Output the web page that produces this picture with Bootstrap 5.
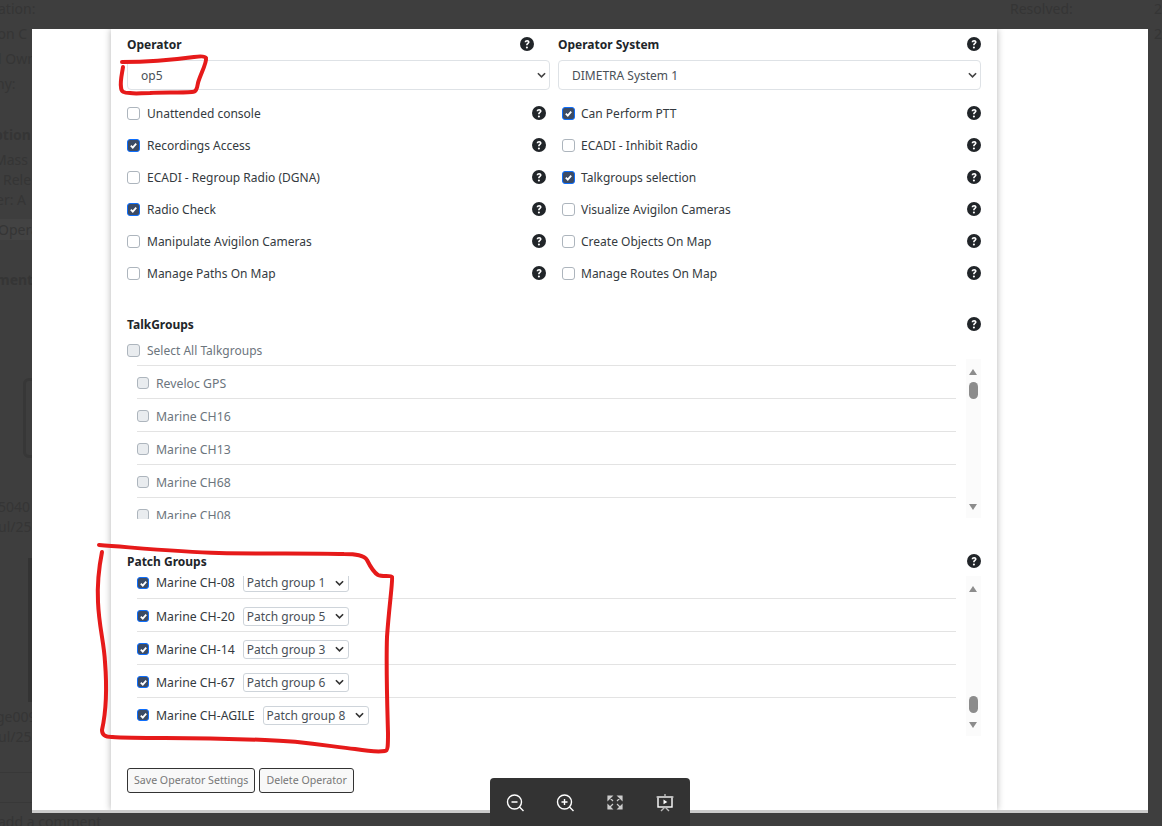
<!DOCTYPE html>
<html lang="en">
<head>
    <meta charset="UTF-8">
    <title>Operator Settings</title>
    <link href="https://cdn.jsdelivr.net/npm/bootstrap@5.3.0/dist/css/bootstrap.min.css" rel="stylesheet">
    <style>
        html, body {
            height: 826px;
            overflow: hidden;
        }
        body {
            background-color: #3e3e3e;
            font-family: "Noto Sans", "Open Sans", sans-serif;
            font-size: 12px;
            color: #343a40;
        }
        /* page behind the viewer, only its edges show */
        .ghost-page {
            height: 826px;
            color: #353535;
            font-size: 14px;
            white-space: nowrap;
            overflow: hidden;
        }
        .ghost-left {
            width: 32px;
        }
        .ghost-line {
            height: 20px;
            line-height: 20px;
        }
        .ghost-tall {
            height: 25px;
            line-height: 25px;
        }
        .ghost-first { margin-top: -4px; }
        .ghost-gap-a { margin-top: 29px; }
        .ghost-gap-b { margin-top: 30px; }
        .ghost-gap-c { margin-top: 39px; }
        .ghost-gap-d { margin-top: 88px; }
        .ghost-gap-e { margin-top: 9px; }
        .ghost-gap-f { margin-top: 21px; }
        .ghost-gap-g { margin-top: 25px; }
        .ghost-gap-h { margin-top: 5px; }
        .shift-a { margin-left: -6px; }
        .shift-b { margin-left: -4px; }
        .shift-c { margin-left: -2px; }
        .shift-d { margin-left: 3px; }
        .ghost-btn {
            background: #434343;
            height: 21px;
            line-height: 21px;
        }
        .ghost-box {
            margin-left: 23px;
            width: 20px;
            height: 80px;
            border: 3px solid #373737;
            border-radius: 6px;
        }
        .ghost-image {
            margin-left: 28px;
            width: 10px;
            height: 144px;
            background: #333;
        }
        .ghost-rule {
            height: 1px;
            background: #383838;
        }
        .ghost-right {
            width: 152px;
        }
        .viewer-sheet {
            position: absolute;
            left: 32px;
            top: 29px;
            width: 1116px;
            height: 784px;
            background: #fff;
            border-bottom: 3px solid #ccc;
            padding-left: 79px;
            overflow: hidden;
        }
        .form-sheet {
            width: 886px;
            height: 781px;
            padding: 0 16px;
            box-shadow: 0 0 7px rgba(0, 0, 0, .3);
            background: #fff;
        }
        .col-pair {
            display: grid;
            grid-template-columns: 423px 423px;
            column-gap: 8px;
        }
        .field-title {
            font-weight: 700;
            font-size: 12px;
            line-height: 18px;
            color: #212529;
            height: 22px;
        }
        .field-title span {
            padding-top: 1px;
        }
        .head-row {
            margin-top: 4px;
        }
        .op-select {
            height: 30px;
            margin-top: 5px;
            padding: 2px 30px 0 13px;
            font-size: 12px;
            color: #495057;
            border-radius: 4px;
            background-image: url("data:image/svg+xml,%3Csvg xmlns='http://www.w3.org/2000/svg' viewBox='0 0 10 6'%3E%3Cpath d='M1 1l4 4 4-4' fill='none' stroke='%23444' stroke-width='1.8'/%3E%3C/svg%3E");
            background-size: 9px 6px;
            background-position: right 3px center;
        }
        .help-dot {
            width: 14px;
            height: 14px;
            flex: none;
        }
        .perm-grid {
            margin-top: 7px;
        }
        .perm-row {
            height: 32px;
        }
        .perm-label {
            padding-top: 2px;
        }
        .left-perms .perm-row {
            padding-right: 4px;
        }
        .right-perms .perm-row {
            padding-left: 4px;
        }
        .right-perms .tick {
            margin-right: 6px;
        }
        .tick {
            width: 13px;
            height: 13px;
            margin: 0 7px 0 0;
            flex: none;
            border-radius: 3px;
            border: 1px solid #adb5bd;
            background: #fff;
            position: relative;
        }
        .tick.on {
            background: #3c4b64;
            border-color: #0d6efd;
        }
        .tick.on svg {
            position: absolute;
            left: 1px;
            top: 1px;
            width: 9px;
            height: 9px;
        }
        .tick.off {
            background: #e9ecef;
        }
        .group-block {
            position: relative;
        }
        .talk-block {
            margin-top: 24px;
        }
        .patch-block {
            margin-top: 31px;
        }
        .select-all {
            height: 30px;
        }
        .muted-text {
            color: #6c757d;
        }
        .scroll-list {
            margin-left: 10px;
            width: 819px;
            overflow: hidden;
            font-size: 12.25px;
        }
        .talk-list {
            height: 154px;
        }
        .patch-list {
            height: 160px;
            margin-top: 4px;
        }
        .patch-inner {
            margin-top: -11px;
        }
        .scroll-list .tick {
            width: 12px;
            height: 12px;
        }
        .list-line {
            height: 33px;
            padding-top: 2px;
            border-top: 1px solid #e3e3e3;
        }
        .list-name {
            padding-top: 2px;
        }
        .fake-scroll {
            position: absolute;
            left: 839px;
            width: 15px;
            background: #fbfbfb;
        }
        .talk-scroll {
            top: 46px;
            height: 159px;
        }
        .patch-scroll {
            top: 26px;
            height: 160px;
        }
        .arrow-up, .arrow-down {
            position: absolute;
            left: 3px;
            width: 0;
            height: 0;
            border-left: 4.5px solid transparent;
            border-right: 4.5px solid transparent;
        }
        .arrow-up {
            top: 10px;
            border-bottom: 6px solid #8c8c8c;
        }
        .arrow-down {
            bottom: 8px;
            border-top: 6px solid #8c8c8c;
        }
        .scroll-thumb {
            position: absolute;
            left: 3px;
            width: 9px;
            height: 17px;
            border-radius: 5px;
            background: #8c8c8c;
        }
        .talk-scroll .scroll-thumb {
            top: 23px;
        }
        .patch-scroll .scroll-thumb {
            top: 120px;
        }
        .patch-select {
            appearance: none;
            width: 106px;
            height: 19px;
            margin-left: 8px;
            padding: 0 14px 0 3px;
            border: 1px solid #ced4da;
            border-radius: 3px;
            font-size: 12px;
            line-height: 17px;
            color: #495057;
            background: #fff url("data:image/svg+xml,%3Csvg xmlns='http://www.w3.org/2000/svg' viewBox='0 0 10 6'%3E%3Cpath d='M1 1l4 4 4-4' fill='none' stroke='%23333' stroke-width='1.8'/%3E%3C/svg%3E") no-repeat right 4px center / 9px 6px;
        }
        .sheet-actions {
            margin-top: 32px;
        }
        .sheet-btn {
            height: 25px;
            padding: 0 6px;
            font-size: 10.6px;
            line-height: 23px;
            color: #777;
            background: #f8f8f8;
            border: 1px solid #333;
            border-radius: 3px;
        }
        .zoom-bar {
            position: absolute;
            left: 490px;
            top: 778px;
            width: 200px;
            height: 48px;
            background: #333;
            border-radius: 4px 4px 0 0;
        }
        .zoom-bar svg {
            width: 20px;
            height: 20px;
        }
        .ink-layer {
            position: absolute;
            left: 0;
            top: 0;
            pointer-events: none;
        }
    </style>
</head>
<body>
    <svg width="0" height="0" class="position-absolute">
        <symbol id="help" viewBox="0 0 16 16">
            <circle cx="8" cy="8" r="8" fill="#212529"/>
            <path d="M5.300 6.100C5.400 4.500 6.600 3.500 8.200 3.500c1.600 0 2.700 1 2.700 2.300 0 1.100-.6 1.600-1.300 2.100-.6.400-.8.700-.8 1.300v.3H7V9c0-1 .4-1.500 1-1.900.6-.4.900-.7.900-1.100 0-.5-.3-.8-.8-.8-.6 0-.9.300-1 .9z" fill="#fff"/>
            <circle cx="7.900" cy="12" r="1.200" fill="#fff"/>
        </symbol>
    </svg>

    <div class="ghost-page d-flex justify-content-between">
        <div class="ghost-left">
            <div class="ghost-tall ghost-first shift-c">ation:</div>
            <div class="ghost-tall shift-a">ion C</div>
            <div class="ghost-tall shift-c">l Own</div>
            <div class="ghost-tall shift-b">ny:</div>
            <div class="ghost-line ghost-gap-a shift-a fw-bold">ption</div>
            <div class="ghost-line shift-a ghost-gap-h">Mass</div>
            <div class="ghost-line shift-d">Rele</div>
            <div class="ghost-line shift-b">er: A</div>
            <div class="ghost-btn ghost-gap-e"><span class="shift-c d-block">Opera</span></div>
            <div class="ghost-line ghost-gap-b shift-b fw-bold">ment</div>
            <div class="ghost-box ghost-gap-d"></div>
            <div class="ghost-line ghost-gap-c shift-c">5040</div>
            <div class="ghost-line shift-c">ul/25 9</div>
            <div class="ghost-image ghost-gap-f"></div>
            <div class="ghost-line shift-b ghost-gap-h">ge009</div>
            <div class="ghost-line shift-c">ul/25 2</div>
            <div class="ghost-rule ghost-gap-g"></div>
            <div class="ghost-rule ghost-gap-a"></div>
            <div class="ghost-line ghost-gap-e shift-c">add a comment</div>
        </div>
        <div class="ghost-right d-flex justify-content-between">
            <div class="ghost-tall ghost-first">Resolved:</div>
            <div class="ghost-first">
                <div class="ghost-tall">2</div>
                <div class="ghost-tall">2</div>
            </div>
        </div>
    </div>

    <div class="viewer-sheet">
        <div class="form-sheet">
            <div class="col-pair">
                <div>
                    <div class="head-row field-title d-flex justify-content-between align-items-center pe-3">
                        <span>Operator</span>
                        <svg class="help-dot" viewBox="0 0 16 16"><use href="#help"/></svg>
                    </div>
                    <select class="form-select op-select"><option>op5</option></select>
                </div>
                <div>
                    <div class="head-row field-title d-flex justify-content-between align-items-center">
                        <span>Operator System</span>
                        <svg class="help-dot" viewBox="0 0 16 16"><use href="#help"/></svg>
                    </div>
                    <select class="form-select op-select"><option>DIMETRA System 1</option></select>
                </div>
            </div>

            <div class="col-pair perm-grid" id="perms"></div>

            <div class="group-block talk-block">
                <div class="field-title d-flex justify-content-between align-items-center">
                    <span>TalkGroups</span>
                    <svg class="help-dot" viewBox="0 0 16 16"><use href="#help"/></svg>
                </div>
                <div class="select-all d-flex align-items-center muted-text">
                    <span class="tick off"></span><span class="perm-label">Select All Talkgroups</span>
                </div>
                <div class="scroll-list talk-list" id="talkList"></div>
                <div class="fake-scroll talk-scroll">
                    <span class="arrow-up"></span>
                    <span class="scroll-thumb"></span>
                    <span class="arrow-down"></span>
                </div>
            </div>

            <div class="group-block patch-block">
                <div class="field-title d-flex justify-content-between align-items-center">
                    <span>Patch Groups</span>
                    <svg class="help-dot" viewBox="0 0 16 16"><use href="#help"/></svg>
                </div>
                <div class="scroll-list patch-list"><div class="patch-inner" id="patchList"></div></div>
                <div class="fake-scroll patch-scroll">
                    <span class="arrow-up"></span>
                    <span class="scroll-thumb"></span>
                    <span class="arrow-down"></span>
                </div>
            </div>

            <div class="sheet-actions d-flex gap-1">
                <button class="sheet-btn">Save Operator Settings</button>
                <button class="sheet-btn">Delete Operator</button>
            </div>
        </div>
    </div>

    <div class="zoom-bar d-flex justify-content-around align-items-center">
        <svg viewBox="0 0 20 20" fill="none" stroke="#fff" stroke-width="1.4"><circle cx="9.500" cy="10" r="7"/><path d="M6.500 10h6M14.500 15l4 4"/></svg>
        <svg viewBox="0 0 20 20" fill="none" stroke="#fff" stroke-width="1.4"><circle cx="9.500" cy="10" r="7"/><path d="M6.500 10h6M9.500 7v6M14.500 15l4 4"/></svg>
        <svg viewBox="0 0 20 20" fill="#ccc" stroke="#ccc" stroke-width="1.200"><path d="M3 4h4L3 8zM4.500 5.500L8 9M17 4h-4l4 4zM15.500 5.500L12 9M3 17h4l-4-4zM4.500 15.500L8 12M17 17h-4l4-4zM15.500 15.500L12 12"/></svg>
        <svg viewBox="0 0 20 20" fill="none" stroke="#fff" stroke-width="1.400"><rect x="3" y="5" width="14" height="10"/><path d="M10 2v3M10 15l-4 4M10 15l4 4M1.500 5h17" stroke="#bbb"/><path d="M8.500 7.500l3.800 2.400-3.800 2.400z" fill="#fff" stroke="none"/></svg>
    </div>

    <svg class="ink-layer" width="1162" height="826" fill="none" stroke="#e61a1a" stroke-width="4" stroke-linecap="round" stroke-linejoin="round">
        <path d="M123 67c-1 7-3 14-2 20 0 5 3 6 9 6 6 1 11 0 20 0 12-1 28 0 42-1 4 0 5-3 6-9 2-8 9-20 8-25-1-2-5-2-12-1-22 3-50 5-72 5"/>
        <path d="M99 545c40 3 80 7 120 8 45 1 90 0 125 1 12 0 20 1 23 6 3 6 6 12 11 15 4 2 13 0 14 2 1 3-3 30-5 60-1 30 0 60 1 96 0 12 0 18-3 18-6 1-18 0-30-2-22-2-50-8-90-9-50-2-90-2-100-2-20 0-40 0-53-1"/>
        <path d="M102 552c-3 15-5 30-4 50 1 25 6 40 7 60 2 25 1 50-3 68 0 5 3 7 10 7"/>
    </svg>

    <script>
        const helpIcon = '<svg class="help-dot" viewBox="0 0 16 16"><use href="#help"/></svg>';
        const tickMark = '<svg viewBox="0 0 10 10" fill="none" stroke="#fff" stroke-width="2"><path d="M2 5.200l2.200 2.200L8 3"/></svg>';

        const leftPerms = [['Unattended console', 0], ['Recordings Access', 1], ['ECADI - Regroup Radio (DGNA)', 0], ['Radio Check', 1], ['Manipulate Avigilon Cameras', 0], ['Manage Paths On Map', 0]];
        const rightPerms = [['Can Perform PTT', 1], ['ECADI - Inhibit Radio', 0], ['Talkgroups selection', 1], ['Visualize Avigilon Cameras', 0], ['Create Objects On Map', 0], ['Manage Routes On Map', 0]];

        function permColumn(items, cls) {
            const rows = items.map(p => `<div class="perm-row d-flex align-items-center">
                <span class="tick ${p[1] ? 'on' : ''}">${p[1] ? tickMark : ''}</span>
                <span class="perm-label flex-grow-1">${p[0]}</span>${helpIcon}</div>`).join('');
            return `<div class="${cls}">${rows}</div>`;
        }
        document.getElementById('perms').innerHTML = permColumn(leftPerms, 'left-perms') + permColumn(rightPerms, 'right-perms');

        const talkGroups = ['Reveloc GPS', 'Marine CH16', 'Marine CH13', 'Marine CH68', 'Marine CH08'];
        document.getElementById('talkList').innerHTML = talkGroups.map(t =>
            `<div class="list-line d-flex align-items-center muted-text"><span class="tick off"></span><span class="list-name">${t}</span></div>`).join('');

        const patchGroups = [['Marine CH-08', 1], ['Marine CH-20', 5], ['Marine CH-14', 3], ['Marine CH-67', 6], ['Marine CH-AGILE', 8]];
        document.getElementById('patchList').innerHTML = patchGroups.map((p, i) =>
            `<div class="list-line d-flex align-items-center ${i ? '' : 'border-0'}"><span class="tick on">${tickMark}</span><span class="list-name">${p[0]}</span>
            <select class="patch-select"><option>Patch group ${p[1]}</option></select></div>`).join('');
    </script>
    <script src="https://cdn.jsdelivr.net/npm/bootstrap@5.3.0/dist/js/bootstrap.bundle.min.js"></script>
</body>
</html>
